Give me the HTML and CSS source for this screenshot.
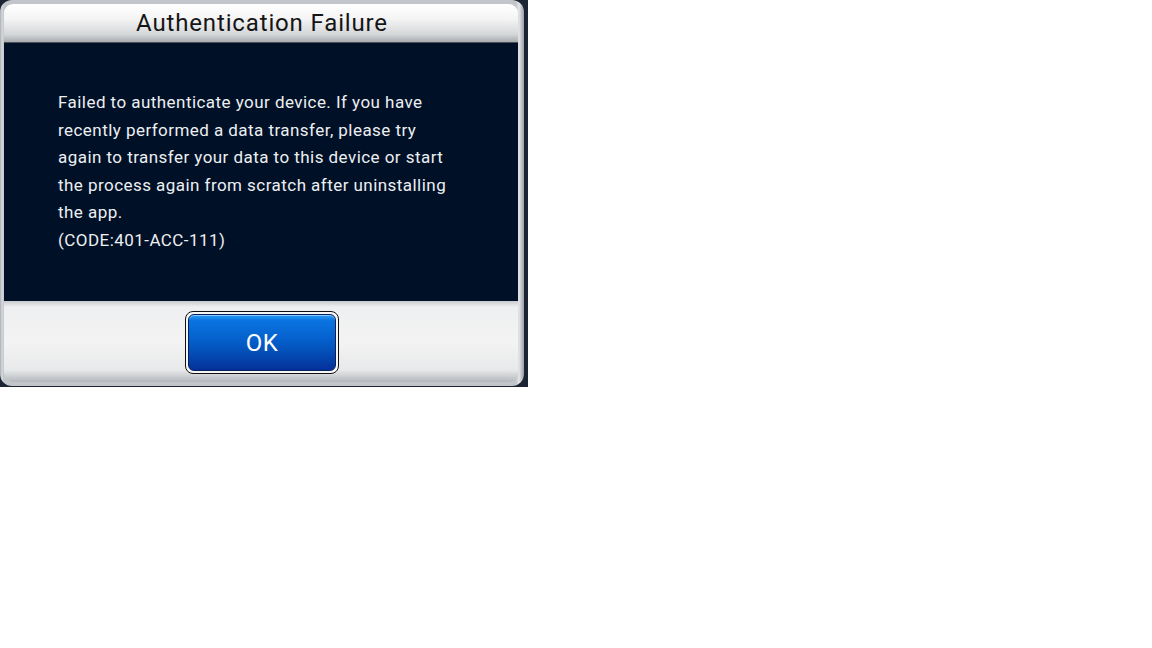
FILE: index.html
```html
<!DOCTYPE html>
<html>
<head>
<meta charset="utf-8">
<link rel="stylesheet" href="styles.css">
</head>
<body>
<div class="screen">
  <div class="dialog">
    <div class="header"><span class="title">Authentication Failure</span></div>
    <div class="content">
      <p class="message">Failed to authenticate your device. If you have<br>recently performed a data transfer, please try<br>again to transfer your data to this device or start<br>the process again from scratch after uninstalling<br>the app.<br>(CODE:401-ACC-111)</p>
    </div>
    <div class="footer">
      <div class="btn-outer"><div class="btn">OK</div></div>
    </div>
  </div>
</div>
</body>
</html>
```
FILE: styles.css
```css
html, body { margin: 0; padding: 0; background: #ffffff; }
.screen {
  width: 528px; height: 387px;
  background: #1b2433;
  overflow: hidden;
}
.dialog {
  width: 524px; height: 386px;
  box-sizing: border-box;
  padding: 4px 6px 4px 4px;
  border-radius: 12px;
  background: linear-gradient(90deg, #a9adb2 0px, #d6d9dc 2px, #c2c6ca 4px, #c2c6ca 516px, #e4e6e8 519px, #9a9ea3 524px);
  display: flex; flex-direction: column;
  font-family: Roboto, "DejaVu Sans", sans-serif;
}
.header {
  height: 38px;
  border-radius: 9px 9px 0 0;
  background: linear-gradient(180deg, #ffffff 0%, #f4f4f5 40%, #d4d6d8 80%, #a9acb0 100%);
  display: flex; align-items: center; justify-content: center;
  border-bottom: 1px solid #4a5058;
}
.title { color: #151515; font-size: 24px; letter-spacing: 0.85px; margin-left: 2px; }
.content {
  height: 258px;
  background: #001026;
  box-sizing: border-box;
  padding: 46px 0 0 54px;
}
.message {
  margin: 0;
  color: #eceff2;
  font-size: 17px;
  letter-spacing: 0.45px;
  line-height: 27.5px;
}
.footer {
  flex: 1;
  border-radius: 0 0 9px 9px;
  background: linear-gradient(180deg, #c8cbce 0px, #eeeff0 6px, #f3f3f3 50%, #e8e9ea 85%, #b4b8bc 100%);
  display: flex; justify-content: center; align-items: flex-start;
  padding-top: 10px;
}
.btn-outer {
  width: 154px; height: 63px;
  box-sizing: border-box;
  border: 1px solid #111;
  border-radius: 8px;
  background: #f6f6f6;
  padding: 2px;
  margin-left: 2px;
}
.btn {
  height: 100%;
  box-sizing: border-box;
  border: 1.5px solid #06205a;
  border-radius: 6px;
  background: linear-gradient(180deg, #2a9cf5 0%, #0a74e0 10%, #0560cc 45%, #0348b0 75%, #05309a 100%);
  box-shadow: inset 0 1px 0 rgba(180,220,255,0.7);
  color: #ffffff;
  font-size: 24px;
  letter-spacing: 0.5px;
  display: flex; align-items: center; justify-content: center;
}
```
